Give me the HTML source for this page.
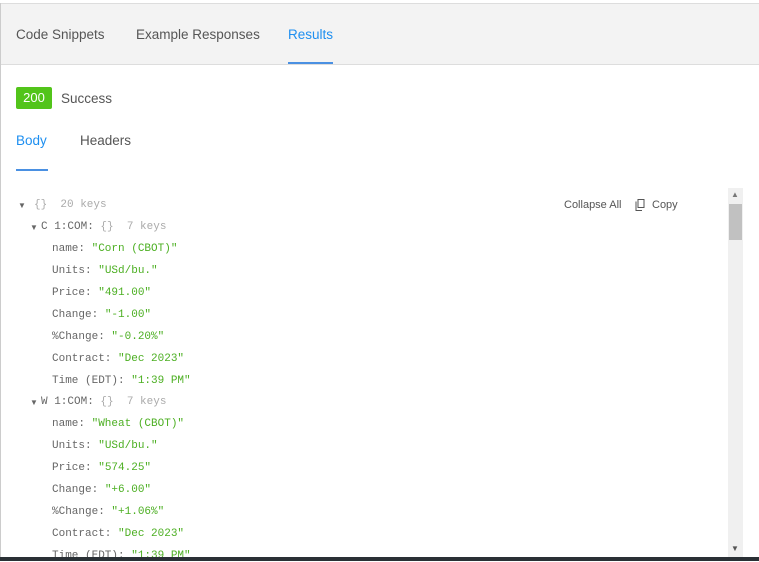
<!DOCTYPE html><html><head><style>
body{margin:0;width:759px;height:561px;overflow:hidden;background:#fff;font-family:"Liberation Sans",sans-serif;position:relative}
.l{position:absolute;left:0;top:3px;bottom:0;width:1px;background:#ccc}
.hd{position:absolute;left:1px;right:0;top:3px;height:60px;background:#f3f3f3;border-top:1px solid #ddd;border-bottom:1px solid #ddd}
.t{position:absolute;top:27px;font-size:13.5px;color:#555}
.a{color:#1e8ff0}
.u{position:absolute;height:2px;background:#4a90e2}
.badge{position:absolute;left:16px;top:87px;width:36px;height:22px;background:#52c41a;color:#fff;font-size:13px;text-align:center;line-height:22px;border-radius:2px}
.j{position:absolute;font-family:"Liberation Mono",monospace;font-size:11px;color:#666;white-space:pre}
.s{color:#4caf22}.g{color:#aaa}
.sb{position:absolute;left:728px;top:188px;width:15px;height:369px;background:#f0f0f0}
.th{position:absolute;left:729px;top:204px;width:13px;height:36px;background:#c1c1c1}
.bot{position:absolute;left:0;right:0;bottom:0;height:4px;background:#2a3035}
.tri{position:absolute;font-size:8px;color:#666}
</style></head><body>
<div class="hd"></div><div class="l"></div>
<div class="t" style="left:16px">Code Snippets</div>
<div class="t" style="left:136px">Example Responses</div>
<div class="t a" style="left:288px">Results</div>
<div class="u" style="left:288px;width:45px;top:62px"></div>
<div class="badge">200</div>
<div style="position:absolute;left:61px;top:91px;font-size:13.5px;color:#555">Success</div>
<div style="position:absolute;left:16px;top:133px;font-size:13.5px" class="a">Body</div>
<div style="position:absolute;left:80px;top:133px;font-size:13.5px;color:#555">Headers</div>
<div class="u" style="left:16px;width:32px;top:169px"></div>
<div style="position:absolute;left:564px;top:199px;font-size:11px;color:#555">Collapse All</div>
<svg style="position:absolute;left:635px;top:199px" width="10" height="12"><rect x="3" y="0.5" width="6" height="8" fill="none" stroke="#555"/><path d="M1 2.5V11.5H7" fill="none" stroke="#555"/></svg>
<div style="position:absolute;left:652px;top:199px;font-size:11px;color:#555">Copy</div>
<div class="tri" style="left:18px;top:201px">▼</div>
<div class="j" style="left:34px;top:199px"><span class="g">{}  20 keys</span></div>
<div class="tri" style="left:30px;top:223px">▼</div>
<div class="j" style="left:41px;top:221px">C 1:COM: <span class="g">{}  7 keys</span></div>
<div class="j" style="left:52px;top:243px">name: <span class="s">"Corn (CBOT)"</span></div>
<div class="j" style="left:52px;top:265px">Units: <span class="s">"USd/bu."</span></div>
<div class="j" style="left:52px;top:287px">Price: <span class="s">"491.00"</span></div>
<div class="j" style="left:52px;top:309px">Change: <span class="s">"-1.00"</span></div>
<div class="j" style="left:52px;top:331px">%Change: <span class="s">"-0.20%"</span></div>
<div class="j" style="left:52px;top:353px">Contract: <span class="s">"Dec 2023"</span></div>
<div class="j" style="left:52px;top:375px">Time (EDT): <span class="s">"1:39 PM"</span></div>
<div class="tri" style="left:30px;top:398px">▼</div>
<div class="j" style="left:41px;top:396px">W 1:COM: <span class="g">{}  7 keys</span></div>
<div class="j" style="left:52px;top:418px">name: <span class="s">"Wheat (CBOT)"</span></div>
<div class="j" style="left:52px;top:440px">Units: <span class="s">"USd/bu."</span></div>
<div class="j" style="left:52px;top:462px">Price: <span class="s">"574.25"</span></div>
<div class="j" style="left:52px;top:484px">Change: <span class="s">"+6.00"</span></div>
<div class="j" style="left:52px;top:506px">%Change: <span class="s">"+1.06%"</span></div>
<div class="j" style="left:52px;top:528px">Contract: <span class="s">"Dec 2023"</span></div>
<div class="j" style="left:52px;top:550px">Time (EDT): <span class="s">"1:39 PM"</span></div>
<div class="sb"></div><div class="th"></div>
<div style="position:absolute;left:731px;top:190px;font-size:8px;color:#777">▲</div>
<div style="position:absolute;left:731px;top:544px;font-size:8px;color:#555">▼</div>
<div class="bot"></div>
</body></html>
